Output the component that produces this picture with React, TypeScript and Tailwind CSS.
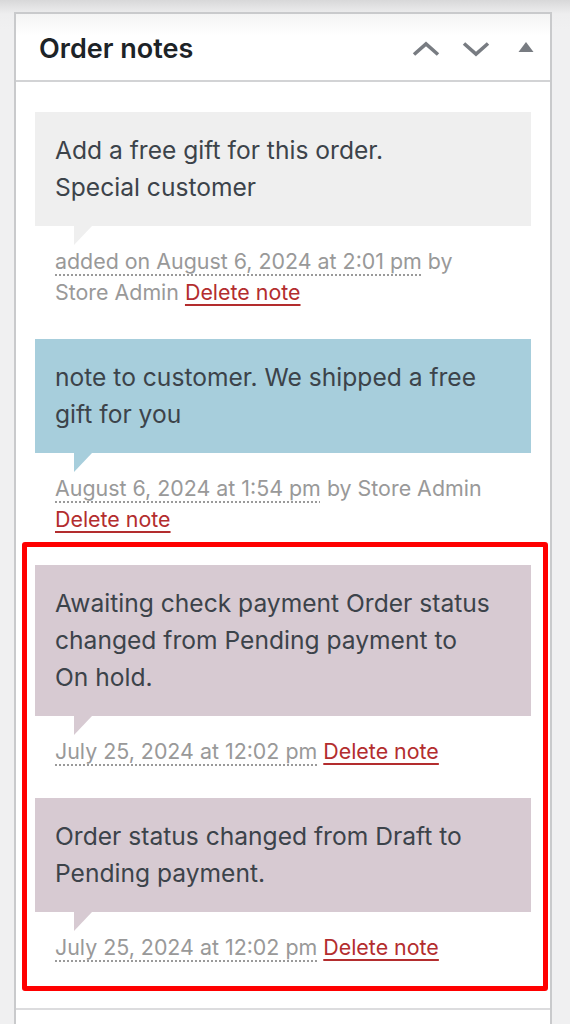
import React from "react";

type Note = {
  bg: string;
  fill: string;
  lines: string[];
  meta: React.ReactNode;
};

const font = { fontFamily: 'Inter, "Noto Sans", sans-serif' };

function Abbr({ children }: { children: React.ReactNode }) {
  return (
    <span className="underline decoration-dotted decoration-[#9a9a9a] decoration-[1.5px] underline-offset-[5px]">
      {children}
    </span>
  );
}

function Del() {
  return (
    <span className="text-[#b32d2e] underline decoration-[1.5px] underline-offset-[4px]">
      Delete note
    </span>
  );
}

function NoteItem({ note, last }: { note: Note; last?: boolean }) {
  return (
    <li className={last ? "" : "mb-[31px]"}>
      <div className={`${note.bg} px-[20px] py-[20px] text-[24.6px] leading-[37px] text-[#3c434a]`}>
        {note.lines.map((l, i) => (
          <div key={i} className="whitespace-nowrap">
            {l}
          </div>
        ))}
      </div>
      <div className="h-[20px] pl-[39px]">
        <svg width="18" height="19" viewBox="0 0 18 19" className="block">
          <polygon points="0,0 18,0 0,19" fill={note.fill} />
        </svg>
      </div>
      <div className="px-[20px] text-[21.4px] leading-[31px] text-[#999999]">{note.meta}</div>
    </li>
  );
}

export default function App() {
  const notes: Note[] = [
    {
      bg: "bg-[#efefef]",
      fill: "#efefef",
      lines: ["Add a free gift for this order.", "Special customer"],
      meta: (
        <>
          <div className="whitespace-nowrap">
            <Abbr>added on August 6, 2024 at 2:01 pm</Abbr> by
          </div>
          <div className="whitespace-nowrap">
            Store Admin <Del />
          </div>
        </>
      ),
    },
    {
      bg: "bg-[#a7cedc]",
      fill: "#a7cedc",
      lines: ["note to customer. We shipped a free", "gift for you"],
      meta: (
        <>
          <div className="whitespace-nowrap">
            <Abbr>August 6, 2024 at 1:54 pm</Abbr> by Store Admin
          </div>
          <div className="whitespace-nowrap">
            <Del />
          </div>
        </>
      ),
    },
  ];
  const highlighted: Note[] = [
    {
      bg: "bg-[#d7cad2]",
      fill: "#d7cad2",
      lines: ["Awaiting check payment Order status", "changed from Pending payment to", "On hold."],
      meta: (
        <div className="whitespace-nowrap">
          <Abbr>July 25, 2024 at 12:02 pm</Abbr> <Del />
        </div>
      ),
    },
    {
      bg: "bg-[#d7cad2]",
      fill: "#d7cad2",
      lines: ["Order status changed from Draft to", "Pending payment."],
      meta: (
        <div className="whitespace-nowrap">
          <Abbr>July 25, 2024 at 12:02 pm</Abbr> <Del />
        </div>
      ),
    },
  ];

  return (
    <div
      className="h-[1024px] w-[570px] overflow-hidden bg-[linear-gradient(to_bottom,#d8d8d9_0px,#eeeeef_14px,#f0f0f1_30px)] pt-[12px] pl-[14px] pr-[18px]"
      style={font}
    >
      <div className="h-[1100px] border-2 border-[#c9cacc] bg-white">
        <div className="flex h-[68px] items-center justify-between border-b-2 border-[#d2d3d5] bg-[linear-gradient(to_bottom,#f4f4f4_0px,#ffffff_22px)] pl-[23px] pr-[16px] pt-[4px]">
          <h2 className="text-[27px] font-semibold text-[#1d2327]">Order notes</h2>
          <div className="flex items-center">
            <svg width="28" height="16" viewBox="0 0 28 16" className="mr-[22px]">
              <polyline points="2,13.5 14,3 26,13.5" fill="none" stroke="#787c82" strokeWidth="3.6" />
            </svg>
            <svg width="28" height="16" viewBox="0 0 28 16" className="mr-[28px]">
              <polyline points="2,2.5 14,13 26,2.5" fill="none" stroke="#787c82" strokeWidth="3.6" />
            </svg>
            <svg width="16" height="12" viewBox="0 0 16 12" className="mb-[4px]">
              <polygon points="0.5,11 8,1 15.5,11" fill="#787c82" />
            </svg>
          </div>
        </div>
        <div className="px-[19px] pt-[30px]">
          <ul>
            {notes.map((n, i) => (
              <NoteItem key={i} note={n} />
            ))}
          </ul>
          <div className="-ml-[13px] -mr-[17px] -mt-[24px] rounded-[3px] border-[5px] border-[#ff0000] pb-[23px] pl-[8px] pr-[12px] pt-[18px]">
            <ul>
              {highlighted.map((n, i) => (
                <NoteItem key={i} note={n} last={i === highlighted.length - 1} />
              ))}
            </ul>
          </div>
          <div className="-mx-[19px] mt-[17px] border-t-2 border-[#dcdcde]" />
        </div>
      </div>
    </div>
  );
}
